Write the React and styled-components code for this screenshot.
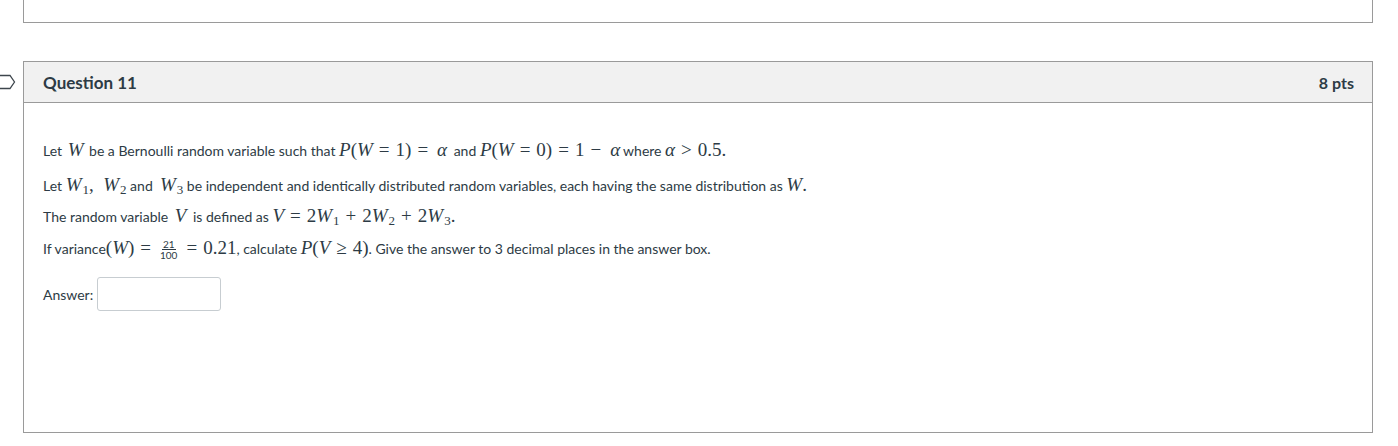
import React from 'react';
import styled, { createGlobalStyle } from 'styled-components';

const Global = createGlobalStyle`
  html, body { margin: 0; padding: 0; background: #fff; }
  body {
    font-family: Lato, "Open Sans", "Liberation Sans", sans-serif;
    color: #2d3b45;
    font-size: 14px;
  }
`;

const Page = styled.div`
  width: 1398px;
  height: 446px;
  overflow: hidden;
  display: flex;
  flex-direction: column;
  gap: 38px;
  padding-left: 23px;
  box-sizing: border-box;
`;

const PrevCard = styled.div`
  width: 1350px;
  height: 23px;
  box-sizing: border-box;
  border: 1px solid #9a9a9a;
  border-top: none;
`;

const Row = styled.div`
  position: relative;
`;

const Marker = styled.svg`
  position: absolute;
  left: -23px;
  top: 13px;
`;

const Card = styled.div`
  width: 1350px;
  height: 372px;
  box-sizing: border-box;
  border: 1px solid #9a9a9a;
  display: flex;
  flex-direction: column;
`;

const Header = styled.div`
  height: 40px;
  background: #f1f1f1;
  border-bottom: 1px solid #9a9a9a;
  display: flex;
  align-items: center;
  justify-content: space-between;
  padding: 0 18px 0 19px;
  font-size: 17px;
  font-weight: 700;
  color: #2d3b45;
  & > span:last-child { font-size: 16px; }
`;

const Body = styled.div`
  padding: 37px 19px 0;
`;

const Para = styled.p`
  margin: 0 0 ${p => p.$gap}px;
  line-height: 20px;
  display: flex;
  align-items: baseline;
  white-space: pre;
`;

const M = styled.span`
  font-family: "Liberation Serif", "Times New Roman", serif;
  font-size: 19px;
  font-style: ${p => (p.$i ? 'italic' : 'normal')};
  padding: 0 ${p => p.$pad || 0}px;
`;

const Op = styled.span`
  font-family: "Liberation Serif", "Times New Roman", serif;
  font-size: 19px;
  padding: 0 6px;
`;

const Sub = styled.sub`
  font-family: "Liberation Serif", serif;
  font-style: normal;
  font-size: 13px;
  vertical-align: -3px;
  line-height: 0;
  padding-left: 1px;
`;

const Frac = styled.span`
  display: inline-flex;
  flex-direction: column;
  align-items: center;
  font-size: 10px;
  line-height: 10px;
  margin: 0 3px;
  position: relative;
  top: -6px;
  & > span:first-child {
    border-bottom: 1px solid #2d3b45;
    padding: 0 1px;
  }
`;

const AnswerRow = styled.div`
  display: flex;
  align-items: center;
  gap: 4px;
  margin-top: 11px;
`;

const Input = styled.input`
  width: 124px;
  height: 34px;
  box-sizing: border-box;
  border: 1px solid #c7cdd1;
  border-radius: 3px;
  outline: none;
`;

const W = ({ n }) => (
  <M $i>W{n ? <Sub>{n}</Sub> : null}</M>
);

export default function App() {
  return (
    <Page>
      <Global />
      <PrevCard />
      <Row>
        <Marker width="16" height="16" viewBox="0 0 16 16">
          <path d="M-4 1.5 H10 L14.5 8 L10 14.5 H-4" fill="none" stroke="#3d454c" strokeWidth="1.3" />
        </Marker>
        <Card>
          <Header>
            <span>Question 11</span>
            <span>8 pts</span>
          </Header>
          <Body>
            <Para $gap={14}>
              Let <M $i $pad={2}>W</M> be a Bernoulli random variable such that{' '}
              <M $i>P</M><M>(</M><M $i>W</M><Op>=</Op><M>1)</M><Op>=</Op><M $i $pad={3}>α</M> and{' '}
              <M $i>P</M><M>(</M><M $i>W</M><Op>=</Op><M>0)</M><Op>=</Op><M>1</M><Op>−</Op><M $i $pad={3}>α</M>where{' '}
              <M $i>α</M><Op>&gt;</Op><M>0.5.</M>
            </Para>
            <Para $gap={10}>
              Let <W n="1" /><M>,  </M><W n="2" /> and  <W n="3" /> be independent and identically distributed random variables, each having the same distribution as{' '}
              <M $i>W</M><M>.</M>
            </Para>
            <Para $gap={11}>
              The random variable <M $i $pad={3}>V</M> is defined as <M $i>V</M><Op>=</Op><M>2</M><W n="1" /><Op>+</Op><M>2</M><W n="2" /><Op>+</Op><M>2</M><W n="3" /><M>.</M>
            </Para>
            <Para $gap={0}>
              If variance<M>(</M><M $i>W</M><M>)</M><Op>=</Op>
              <Frac><span>21</span><span>100</span></Frac>
              <Op>=</Op><M>0.21</M>, calculate <M $i>P</M><M>(</M><M $i>V</M><Op>≥</Op><M>4)</M>. Give the answer to 3 decimal places in the answer box.
            </Para>
            <AnswerRow>
              <span>Answer:</span>
              <Input type="text" />
            </AnswerRow>
          </Body>
        </Card>
      </Row>
    </Page>
  );
}
